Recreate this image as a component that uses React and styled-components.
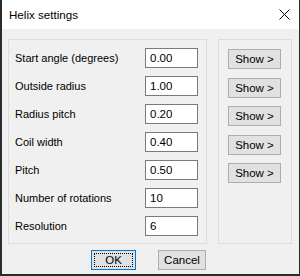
import React from "react";
import styled, { createGlobalStyle } from "styled-components";

const Global = createGlobalStyle`
  html, body { margin: 0; padding: 0; background: #f0f0f0; }
  body { font-family: "Segoe UI", "Liberation Sans", Arial, sans-serif; font-size: 11px; }
`;

const Frame = styled.div`
  width: 300px;
  height: 276px;
  box-sizing: border-box;
  border-left: 2px solid #2b2b2b;
  border-right: 1px solid #2b2b2b;
  border-bottom: 2px solid #2b2b2b;
  background: #f0f0f0;
  display: flex;
  flex-direction: column;
`;

const TitleBar = styled.div`
  height: 29px;
  background: #ffffff;
  display: flex;
  align-items: center;
  justify-content: space-between;
  padding: 0 9px 0 7px;
  color: #000;
  font-size: 11.6px;
`;

const Body = styled.div`
  flex: 1;
  display: flex;
  flex-direction: column;
  padding: 10px 7px 4px 6px;
`;

const Groups = styled.div`
  display: flex;
  gap: 11px;
`;

const GroupBox = styled.div`
  box-sizing: border-box;
  height: 205px;
  width: ${(p) => p.$w}px;
  border: 1px solid #dcdcdc;
`;

const FieldGrid = styled.div`
  display: grid;
  grid-template-columns: 1fr 53px;
  row-gap: 8px;
  padding: 8px 8px 0 6px;
`;

const Label = styled.label`
  height: 20px;
  display: flex;
  align-items: center;
  color: #000;
  font-size: 11px;
`;

const Input = styled.input`
  box-sizing: border-box;
  width: 53px;
  height: 20px;
  border: 1px solid #7a7a7a;
  background: #fff;
  padding: 0 0 0 4px;
  font-family: "Liberation Sans", Arial, sans-serif;
  font-size: 11.5px;
  color: #000;
  outline: none;
`;

const ShowList = styled.div`
  display: flex;
  flex-direction: column;
  gap: 8.5px;
  padding: 9px 0 0 9px;
`;

const Button = styled.button`
  box-sizing: border-box;
  width: ${(p) => p.$w || 53}px;
  height: 20px;
  background: #e1e1e1;
  border: 1px solid ${(p) => (p.$focus ? "#0078d7" : "#adadad")};
  padding: 0;
  margin: 0;
  font-family: inherit;
  font-size: 11.5px;
  color: #000;
  display: flex;
  align-items: center;
  justify-content: center;
  position: relative;
`;

const FocusRing = styled.span`
  position: absolute;
  inset: 2px;
  border: 1px dotted #000;
`;

const Footer = styled.div`
  display: flex;
  justify-content: center;
  gap: 22px;
  margin-top: 6px;
  padding-right: 3px;
`;

const fields = [
  ["Start angle (degrees)", "0.00"],
  ["Outside radius", "1.00"],
  ["Radius pitch", "0.20"],
  ["Coil width", "0.40"],
  ["Pitch", "0.50"],
  ["Number of rotations", "10"],
  ["Resolution", "6"],
];

export default function App() {
  return (
    <>
      <Global />
      <Frame>
        <TitleBar>
          <span>Helix settings</span>
          <svg width="11" height="11" viewBox="0 0 11 11">
            <path d="M0.5 0.5 L10.5 10.5 M10.5 0.5 L0.5 10.5" stroke="#000" strokeWidth="1" />
          </svg>
        </TitleBar>
        <Body>
          <Groups>
            <GroupBox $w={199}>
              <FieldGrid>
                {fields.map(([l, v]) => (
                  <React.Fragment key={l}>
                    <Label>{l}</Label>
                    <Input defaultValue={v} />
                  </React.Fragment>
                ))}
              </FieldGrid>
            </GroupBox>
            <GroupBox $w={74}>
              <ShowList>
                {[0, 1, 2, 3, 4].map((i) => (
                  <Button key={i}>Show &gt;</Button>
                ))}
              </ShowList>
            </GroupBox>
          </Groups>
          <Footer>
            <Button $w={45} $focus>
              <FocusRing />
              OK
            </Button>
            <Button $w={48}>Cancel</Button>
          </Footer>
        </Body>
      </Frame>
    </>
  );
}
